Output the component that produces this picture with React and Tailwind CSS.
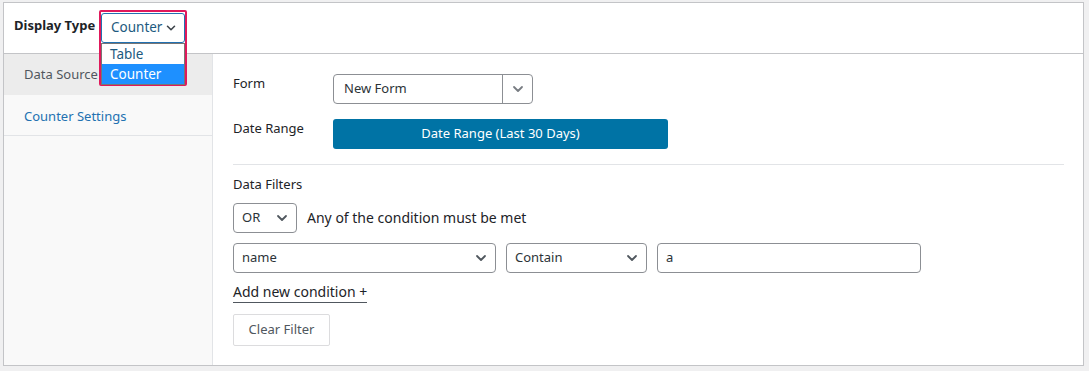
import React from 'react';

const Chevron = ({ className = '' }) => (
  <svg viewBox="0 0 16 16" className={className} fill="none" stroke="currentColor" strokeWidth="1.8" strokeLinecap="round" strokeLinejoin="round">
    <path d="M4 6l4 4 4-4" />
  </svg>
);

const SelectBox = ({ value, className = '' }) => (
  <div className={`flex items-center justify-between h-[30px] border border-[#8c8f94] rounded-[4px] bg-white pl-[8px] pr-[6px] text-[#2c3338] ${className}`}>
    <span>{value}</span>
    <Chevron className="w-[16px] h-[16px] text-[#50575e]" />
  </div>
);

const App = () => {
  return (
    <div className="w-[1089px] h-[371px] bg-[#f0f0f1] pt-[2px] pl-[3px] text-[13px] text-[#1d2327]" style={{ fontFamily: '"Segoe UI", "Noto Sans", sans-serif' }}>
      <div className="w-[1081px] h-[364px] bg-white border border-[#c3c4c7] flex flex-col">
        <div className="h-[51px] shrink-0 border-b border-[#c3c4c7] flex items-center pl-[10px] relative">
          <span className="w-[87px] font-bold text-[#1d2327] -mt-[4px]">Display Type</span>
          <div className="relative -mt-[1px] w-[88px]">
            <div className="absolute -left-[2px] -top-[3px] w-[88px] h-[76px] border-2 border-[#e0195b] rounded-[2px]" />
            <div className="relative flex items-center justify-between h-[30px] w-[84px] border border-[#2271b1] rounded-[3px] bg-white pl-[9px] pr-[6px] text-[13.5px] text-[#1d5a80]">
              <span>Counter</span>
              <Chevron className="w-[14px] h-[14px] text-[#3c434a]" />
            </div>
            <div className="absolute left-0 top-[30px] w-[84px] border border-[#767676] bg-white text-[13.5px] z-10">
              <div className="h-[20px] leading-[20px] pl-[8px] text-[#1d5a80]">Table</div>
              <div className="h-[20px] leading-[20px] pl-[8px] bg-[#1e90ff] text-white">Counter</div>
            </div>
          </div>
        </div>
        <div className="flex flex-1 min-h-0">
          <div className="w-[209px] shrink-0 bg-[#f9f9f9] border-r border-[#e2e4e7]">
            <div className="h-[41px] flex items-center pl-[20px] bg-[#ececec] text-[#50575e]">Data Source</div>
            <div className="h-[41px] flex items-center pl-[20px] pt-[3px] text-[#2271b1] border-b border-[#e2e4e7]">Counter Settings</div>
          </div>
          <div className="flex-1 pl-[20px] pr-[19px] pt-[20px]">
            <div className="flex items-start">
              <div className="w-[100px]">Form</div>
              <div className="flex h-[30px] w-[200px] border border-[#8c8f94] rounded-[4px] bg-white">
                <div className="flex-1 flex items-center pl-[10px] text-[#2c3338] border-r border-[#8c8f94]">New Form</div>
                <div className="w-[29px] flex items-center justify-center">
                  <Chevron className="w-[16px] h-[16px] text-[#787c82]" />
                </div>
              </div>
            </div>
            <div className="flex items-start mt-[15px]">
              <div className="w-[100px]">Date Range</div>
              <div className="h-[30px] w-[335px] rounded-[3px] bg-[#0073a5] text-white flex items-center justify-center">Date Range (Last 30 Days)</div>
            </div>
            <div className="border-t border-[#e2e4e7] mt-[15px] pt-[10px]">
              <div>Data Filters</div>
              <div className="flex items-center mt-[8px]">
                <SelectBox value="OR" className="w-[64px] text-[13px]" />
                <span className="ml-[10px] text-[14px] text-[#1d2327]">Any of the condition must be met</span>
              </div>
              <div className="flex items-center mt-[10px] gap-[10px] text-[13px]">
                <SelectBox value="name" className="w-[263px]" />
                <SelectBox value="Contain" className="w-[141px]" />
                <div className="h-[30px] w-[264px] border border-[#8c8f94] rounded-[4px] bg-white flex items-center pl-[8px] text-[#2c3338]">a</div>
              </div>
              <div className="mt-[10px]">
                <span className="inline-block text-[14px] text-[#1d2327] border-b border-[#50575e] leading-[18px] pb-[1px]">Add new condition +</span>
              </div>
              <button className="mt-[11px] h-[32px] w-[97px] border border-[#dcdcde] rounded-[2px] bg-white text-[#50575e] text-[13px]">Clear Filter</button>
            </div>
          </div>
        </div>
      </div>
    </div>
  );
};

export default App;
